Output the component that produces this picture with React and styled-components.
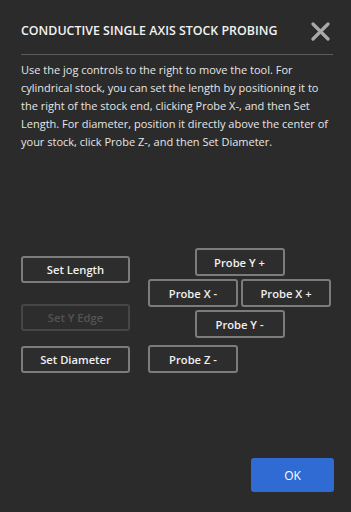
import React from "react";
import styled, { createGlobalStyle } from "styled-components";

const Global = createGlobalStyle`
  html, body { margin: 0; padding: 0; background: #2b2b2b; }
  * { box-sizing: border-box; }
`;

const Page = styled.div`
  height: 512px;
  display: flex;
  flex-direction: column;
  padding: 0 18px 20px 21px;
  font-family: "Open Sans", "Liberation Sans", sans-serif;
  color: #e8e8e8;
`;

const Header = styled.div`
  display: flex;
  align-items: center;
  justify-content: space-between;
  padding: 21px 3px 13px 0;
  border-bottom: 1px solid #5c5c5c;
`;

const Title = styled.h1`
  margin: 0;
  font-size: 12.4px;
  line-height: 20px;
  font-weight: 600;
  color: #f2f2f2;
  text-transform: uppercase;
`;

const Close = styled.button`
  background: none;
  border: 0;
  padding: 0;
  width: 20px;
  height: 20px;
  display: flex;
  align-items: center;
  justify-content: center;
  cursor: pointer;
`;

const Text = styled.p`
  margin: 6px 0 0;
  font-size: 11px;
  line-height: 18px;
  color: #e6e6e6;
`;

const Controls = styled.div`
  margin-top: 97px;
  display: flex;
  flex-direction: column;
  gap: 7px;
`;

const Row = styled.div`
  display: flex;
  align-items: center;
  gap: 18px;
`;

const Column = styled.div`
  display: flex;
  flex-direction: column;
  gap: 21px;
`;

const Grid = styled.div`
  display: grid;
  grid-template-columns: 90px 90px;
  gap: 3px;
  justify-items: center;
`;

const Btn = styled.button`
  width: ${(p) => p.$w || 90}px;
  height: ${(p) => p.$h || 28}px;
  grid-column: ${(p) => (p.$span ? "1 / span 2" : "auto")};
  background: #2d2d2d;
  border: 2px solid ${(p) => (p.disabled ? "#464646" : "#7c7c7c")};
  border-radius: 3px;
  color: ${(p) => (p.disabled ? "#545454" : "#f0f0f0")};
  font-family: "Open Sans", "Liberation Sans", sans-serif;
  font-size: 11.2px;
  font-weight: 600;
  padding: 0;
`;

const Footer = styled.div`
  margin-top: auto;
  display: flex;
  justify-content: flex-end;
`;

const Ok = styled.button`
  width: 83px;
  height: 34px;
  margin-right: -1px;
  background: #2f6bd3;
  border: 0;
  border-radius: 3px;
  color: #ffffff;
  font-family: "Open Sans", "Liberation Sans", sans-serif;
  font-size: 12px;
  font-weight: 400;
`;

export default function App() {
  return (
    <>
      <Global />
      <Page>
        <Header>
          <Title>Conductive Single Axis Stock Probing</Title>
          <Close aria-label="close">
            <svg width="19" height="19" viewBox="0 0 19 19">
              <path d="M2 2 L17 17 M17 2 L2 17" stroke="#a9a9a9" strokeWidth="3.2" strokeLinecap="round" />
            </svg>
          </Close>
        </Header>
        <Text>
          Use the jog controls to the right to move the tool. For cylindrical stock, you can set the length by positioning it to the right of the stock end, clicking Probe X-, and then Set Length. For diameter, position it directly above the center of your stock, click Probe Z-, and then Set Diameter.
        </Text>
        <Controls>
          <Row>
            <Column>
              <Btn $w={109} $h={27}>Set Length</Btn>
              <Btn $w={109} $h={27} disabled>Set Y Edge</Btn>
            </Column>
            <Grid>
              <Btn $span>Probe Y +</Btn>
              <Btn>Probe X -</Btn>
              <Btn>Probe X +</Btn>
              <Btn $span>Probe Y -</Btn>
            </Grid>
          </Row>
          <Row>
            <Btn $w={109} $h={27}>Set Diameter</Btn>
            <Btn>Probe Z -</Btn>
          </Row>
        </Controls>
        <Footer>
          <Ok>OK</Ok>
        </Footer>
      </Page>
    </>
  );
}
